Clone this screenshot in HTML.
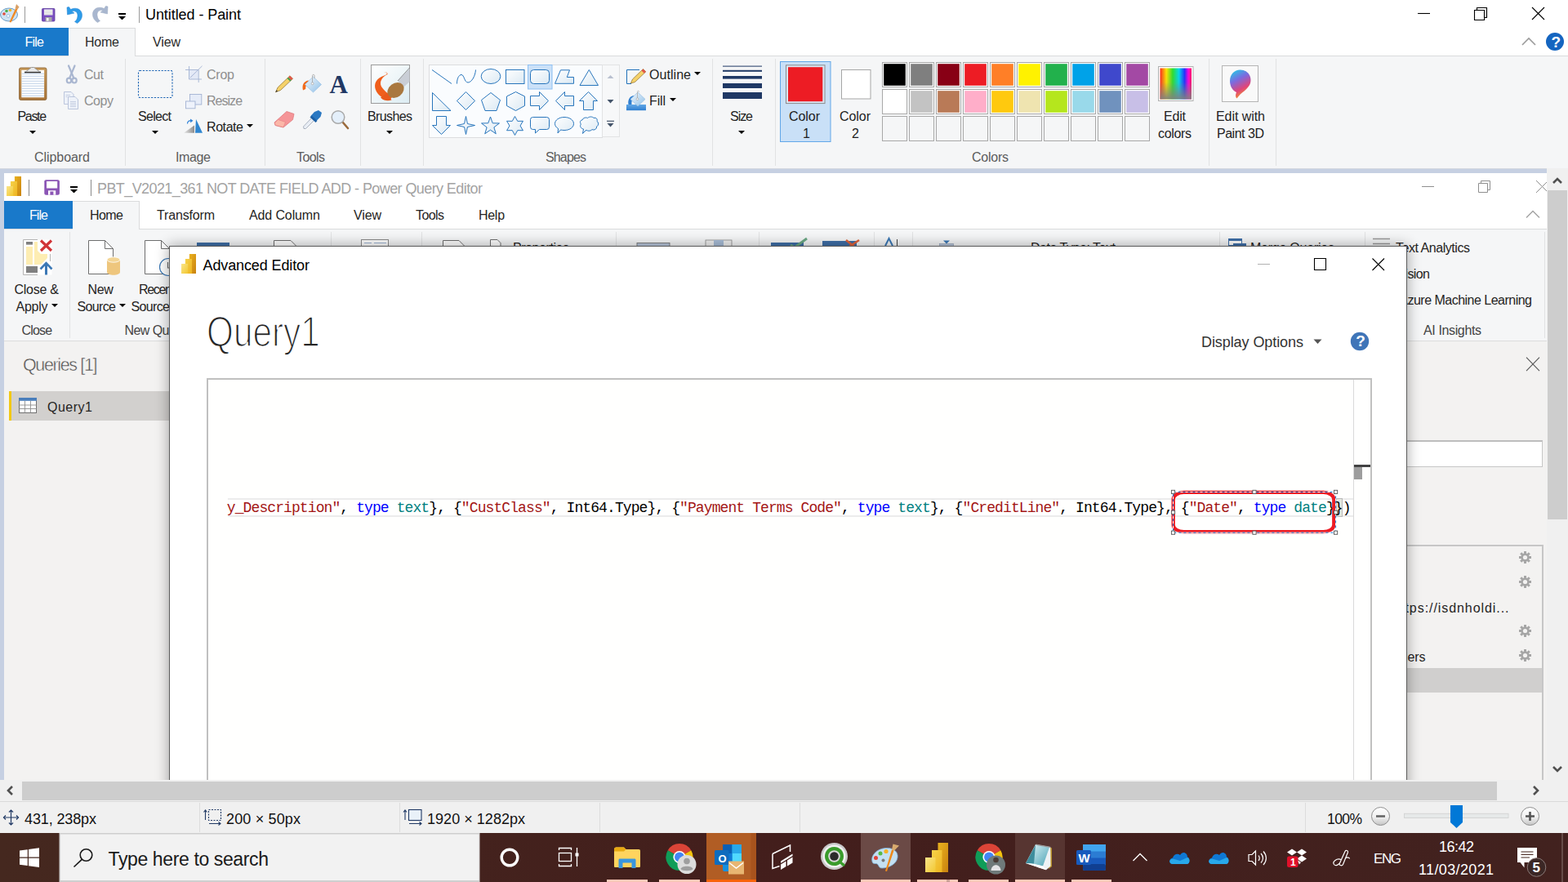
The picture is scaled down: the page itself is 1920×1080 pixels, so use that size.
<!DOCTYPE html>
<html lang="en"><head><meta charset="utf-8"><title>Untitled - Paint</title>
<style>
html,body{margin:0;padding:0;}
body{width:1920px;height:1080px;overflow:hidden;position:relative;background:#fff;font-family:"Liberation Sans",sans-serif;}
div,span,svg{position:absolute;box-sizing:border-box;}
.t{white-space:nowrap;}
.s{font-family:"Liberation Sans",sans-serif;}
.m{font-family:"Liberation Mono",monospace;}
.r{font-family:"Liberation Serif",serif;}
.clip{overflow:hidden;}
</style></head><body>
<div style="left:0px;top:0px;width:1920px;height:34px;background:#ffffff;"></div>
<div style="left:0px;top:34px;width:1920px;height:35px;background:#ffffff;border-bottom:1px solid #dadbdc;"></div>
<div style="left:0px;top:69px;width:1920px;height:137px;background:#f5f6f7;"></div>
<div style="left:0px;top:34px;width:84px;height:34px;background:#1979ca;"></div>
<span class="t s" style="left:30.50px;top:44px;font-size:16px;line-height:16px;color:#ffffff;letter-spacing:-0.753px;">File</span>
<div style="left:84px;top:34px;width:82px;height:35px;background:#f5f6f7;border:1px solid #dadbdc;border-bottom:none;border-left:none;"></div>
<span class="t s" style="left:104.00px;top:44px;font-size:16px;line-height:16px;color:#2b2b2b;letter-spacing:-0.240px;">Home</span>
<span class="t s" style="left:187.00px;top:44px;font-size:16px;line-height:16px;color:#2b2b2b;letter-spacing:-0.133px;">View</span>
<span class="t s" style="left:178.00px;top:9px;font-size:18px;line-height:18px;color:#000000;letter-spacing:-0.072px;">Untitled - Paint</span>
<div style="left:30px;top:8px;width:1px;height:20px;background:#9a9a9a;"></div>
<div style="left:170px;top:8px;width:1px;height:20px;background:#9a9a9a;"></div>
<div style="left:145px;top:16px;width:9px;height:1.5px;background:#000;"></div>
<svg style="left:145px;top:19.5px;" width="9" height="4.5" viewBox="0 0 9 4.5"><path d="M0 0H9L4.5 4.5Z" fill="#000"/></svg>
<svg style="left:1730px;top:0px;" width="180" height="34" viewBox="0 0 180 34"><g stroke="#000" stroke-width="1.1" fill="none">
      <path d="M6 16.5H21"/>
      <path d="M75.5 12.5H87.5V24.5H75.5Z"/><path d="M78.5 12.5V9.5H90.5V21.5H87.5"/>
      <path d="M146 9L161 24M161 9L146 24"/></g></svg>
<svg style="left:1862px;top:44px;" width="20" height="14" viewBox="0 0 20 14"><path d="M2 11L10 3L18 11" stroke="#9b9b9b" stroke-width="1.6" fill="none"/></svg>
<div style="left:1893px;top:40px;width:22px;height:22px;background:#1565c0;border-radius:50%;"></div>
<span class="t s" style="left:1899.50px;top:42px;font-size:19px;line-height:19px;color:#ffffff;font-weight:bold;">?</span>
<svg style="left:0;top:0" width="1920" height="206" viewBox="0 0 1920 206"><defs>
<linearGradient id="shp" x1="0" y1="0" x2="1" y2="1"><stop offset="0" stop-color="#ffffff"/><stop offset="1" stop-color="#dbe9f3"/></linearGradient>
<linearGradient id="rain" x1="0" y1="0" x2="1" y2="0"><stop offset="0" stop-color="#ff2a1a"/><stop offset="0.2" stop-color="#ffe600"/><stop offset="0.4" stop-color="#2de02d"/><stop offset="0.6" stop-color="#00d8f0"/><stop offset="0.78" stop-color="#2030ff"/><stop offset="0.9" stop-color="#ff00e0"/><stop offset="1" stop-color="#ff1060"/></linearGradient>
<linearGradient id="rainfade" x1="0" y1="0" x2="0" y2="1"><stop offset="0" stop-color="#808080" stop-opacity="0"/><stop offset="0.45" stop-color="#808080" stop-opacity="0.1"/><stop offset="1" stop-color="#808080" stop-opacity="0.95"/></linearGradient>
<linearGradient id="clipb" x1="0" y1="0" x2="0" y2="1"><stop offset="0" stop-color="#c79a5a"/><stop offset="1" stop-color="#a8743a"/></linearGradient>
<linearGradient id="p3d" x1="0.2" y1="0" x2="0.6" y2="1"><stop offset="0" stop-color="#27c7e6"/><stop offset="0.35" stop-color="#7a6be0"/><stop offset="0.7" stop-color="#e0457a"/><stop offset="1" stop-color="#f5a21a"/></linearGradient>
<linearGradient id="gry" x1="0" y1="0" x2="1" y2="0"><stop offset="0" stop-color="#e8e8e8"/><stop offset="1" stop-color="#8c8c8c"/></linearGradient>
<linearGradient id="bluebar" x1="0" y1="0" x2="0" y2="1"><stop offset="0" stop-color="#62a8e6"/><stop offset="1" stop-color="#2f7fd0"/></linearGradient>
<linearGradient id="bucket" x1="0" y1="0" x2="1" y2="1"><stop offset="0" stop-color="#f4f9fd"/><stop offset="1" stop-color="#8fc0e8"/></linearGradient>
<linearGradient id="brbg" x1="0" y1="0" x2="1" y2="1"><stop offset="0" stop-color="#ffffff"/><stop offset="1" stop-color="#dcecf2"/></linearGradient>
</defs><ellipse cx="11" cy="18" rx="10.5" ry="8" fill="#cfe3f3" stroke="#6d9ec7" stroke-width="1"/><circle cx="5" cy="17" r="1.8" fill="#e04a3a"/><circle cx="8" cy="13.5" r="1.8" fill="#4caf50"/><circle cx="12.5" cy="12.5" r="1.8" fill="#f5b82e"/><circle cx="10" cy="19.5" r="1.8" fill="#ffffff" stroke="#6d9ec7" stroke-width="0.6"/><path d="M11.5 27L19 10.5L21.5 11.5L13.5 27.5Z" fill="#f08a24"/><path d="M18.5 10.5L20 5L23.5 8.5L21.5 11.5Z" fill="#d9a066"/><rect x="51.5" y="10.5" width="15.5" height="15.5" rx="1" fill="#7a4fc0" stroke="#5b3a9a" stroke-width="0.8"/><rect x="54" y="11.5" width="10.5" height="7" fill="#f4f4f4"/><path d="M54.5 13.5H64M54.5 15.5H64M54.5 17.3H64" stroke="#c9c9c9" stroke-width="0.6"/><rect x="55.5" y="21" width="8" height="5" fill="#a8a8a8"/><rect x="57" y="22" width="2.5" height="3.5" fill="#fff"/><path d="M82 9L82.5 18L91 16L88 14C92 12.5 95.5 15 95 20C94.7 23.5 93 25.5 91.5 26.5L94.5 28.5C98.5 26 100.5 22.5 100.5 18.5C100.5 12 94 8 86.5 11.5L84.5 8.5Z" fill="#2d9be8" stroke="#1f7fd0" stroke-width="0.5"/><path d="M132 8L131.5 17L123 15L126 13C122 11.5 118.5 14 119 19C119.3 22.5 121 24.5 122.5 25.5L119.5 27.5C115.5 25 113.5 21.5 113.5 17.5C113.5 11 120 7 127.5 10.5L129.5 7.5Z" fill="#a9b7cf" stroke="#97a6c0" stroke-width="0.5"/><rect x="23.5" y="83" width="33.5" height="39.5" rx="2" fill="url(#clipb)" stroke="#8a5f2e" stroke-width="0.8"/><rect x="26.3" y="85.8" width="27.8" height="33.5" fill="#ffffff"/><path d="M26.5 90.3H54" stroke="#b9cce4" stroke-width="0.9"/><path d="M26.5 93.3H54" stroke="#b9cce4" stroke-width="0.9"/><path d="M26.5 96.3H54" stroke="#b9cce4" stroke-width="0.9"/><path d="M26.5 99.3H54" stroke="#b9cce4" stroke-width="0.9"/><path d="M26.5 102.3H54" stroke="#b9cce4" stroke-width="0.9"/><path d="M26.5 105.3H54" stroke="#b9cce4" stroke-width="0.9"/><path d="M26.5 108.3H54" stroke="#b9cce4" stroke-width="0.9"/><path d="M26.5 111.3H54" stroke="#b9cce4" stroke-width="0.9"/><path d="M26.5 114.3H54" stroke="#b9cce4" stroke-width="0.9"/><path d="M26.5 117.3H54" stroke="#b9cce4" stroke-width="0.9"/><path d="M30 88.5H50" stroke="#2a2a2a" stroke-width="1.6"/><path d="M32 87.5L38.5 82.5H41.5L48 87.5" stroke="#9a9a9a" stroke-width="1" fill="#e8e8e8"/><g stroke="#a9b6d0" stroke-width="2.2" fill="none" stroke-linecap="round"><path d="M84 80.5L90.5 96"/><path d="M91.5 80.5L85 96"/><ellipse cx="84.5" cy="98.5" rx="2.7" ry="3"/><ellipse cx="91" cy="98.5" rx="2.7" ry="3"/></g><g fill="#eef2f9" stroke="#b4c0d8" stroke-width="0.9"><path d="M78.5 112.5H87L90 115.5V127.5H78.5Z"/><path d="M83.5 118.5H92L95.5 122V133.5H83.5Z"/></g><path d="M86 124.5H93M86 126.5H93M86 128.5H93M86 130.5H93M80.5 116.5H86M80.5 118.5H82.5" stroke="#b4c0d8" stroke-width="0.7"/><rect x="169.5" y="86.5" width="41.5" height="33" rx="1.5" fill="none" stroke="#1c64b4" stroke-width="1.1" stroke-dasharray="2.2 1.6"/><rect x="231.5" y="85.5" width="11.5" height="11.5" fill="#e3e9f6"/><g stroke="#a3b2d2" stroke-width="0.9" fill="none"><path d="M227 85.5H243.2V101"/><path d="M231.5 81V97H247"/><path d="M233 95L247.5 80.8"/></g><rect x="232.5" y="115.5" width="14.3" height="12.5" fill="#e6ecf8" stroke="#a3b2d2" stroke-width="0.9"/><rect x="227.5" y="124" width="11.5" height="8.8" fill="#eef2fb" stroke="#a3b2d2" stroke-width="0.9"/><path d="M225 162.8H238V153.5Z" fill="url(#gry)"/><path d="M239 162.8H248L240 146Z" fill="#2f86d0"/><path d="M229.5 151.5C229.5 148.5 232 147.3 234.5 147.6" stroke="#2a7fd6" stroke-width="1.2" fill="none"/><path d="M233 145.5L236.5 147.7L233.3 150.2Z" fill="#2a7fd6"/><path d="M337.5 112.8L340.2 107L355 92.8L358.5 96.3L343.5 110.5Z" fill="#f5d26a" stroke="#8a6a2a" stroke-width="0.7"/><path d="M353 94.8L355 92.8L358.5 96.3L356.5 98.3Z" fill="#e2574c"/><path d="M351.6 96L353 94.7L356.6 98.2L355.2 99.5Z" fill="#3e9a4a"/><path d="M337.5 112.8L338.6 110.3L340.2 111.8Z" fill="#333"/><path d="M371 110.5C369.5 104 372 99.5 377.5 98.5L379 100.5C375.5 102 374 105 374.2 109Z" fill="#f26a1b"/><path d="M373.5 103.5L383.5 94L393.5 103.5L383.5 113Z" fill="url(#bucket)" stroke="#9cc3e6" stroke-width="0.8"/><path d="M382.5 102V92.5C382.5 91 385 91 385 92.5V96" stroke="#b0b0b0" stroke-width="1" fill="none"/><circle cx="382.6" cy="102.3" r="1.4" fill="#fff" stroke="#a0a0a0" stroke-width="0.7"/><path d="M336 150L351 136.5L360 139.5L358.5 146.5L347 156L337 153.5Z" fill="#f59598" stroke="#e07a7e" stroke-width="0.8"/><path d="M336.5 150.5L340.5 146.5L349.5 149.5L347 155.8L337.2 153.3Z" fill="#fbb7a8" stroke="#e07a7e" stroke-width="0.5"/><path d="M372 157.5L371.5 155L381.5 144.5L384.5 147.5L374.5 157.5Z" fill="#e9eef5" stroke="#9aa3b2" stroke-width="0.8"/><path d="M380.5 142L385 137L390 135L394 138L392.5 143L387.5 148Z" fill="#2a78c2"/><path d="M379.5 143.5L381.5 141.5L388.5 148L386.5 150Z" fill="#1c5fa5"/><path d="M419.5 149.5L426 157" stroke="#9a6a3c" stroke-width="2.6" stroke-linecap="round"/><circle cx="414" cy="143.5" r="7.8" fill="#e4effa" stroke="#a9a9a9" stroke-width="1.5"/><rect x="454.5" y="79.5" width="47" height="47" fill="url(#brbg)" stroke="#9b9b9b" stroke-width="1"/><path d="M487 99L501.5 84V100L494 107Z" fill="#c9ced6"/><path d="M487 99L501.5 83" stroke="#7a7a7a" stroke-width="0.8"/><path d="M470 88C476 88.5 474 91.5 470.5 92.5C460 96 457.5 103 460 110C462.5 116.5 470 122 477 122.5L480 119C476 115 470 111 467 106C464 100 468 94 474.5 91C475 89 473 87.5 470 88Z" fill="#f05f1c"/><ellipse cx="484.5" cy="110.5" rx="11" ry="8.5" transform="rotate(-38 484.5 110.5)" fill="#a9783f"/><path d="M466 119.5L474 113.5L479.5 122.5C475 124 470 123.5 466 119.5Z" fill="#e85a1c"/><rect x="525.5" y="79.5" width="212" height="89" fill="#fafcfe" stroke="#dcdddf" stroke-width="1"/><rect x="737.5" y="79.5" width="21" height="88" fill="#f7f8f9" stroke="#e2e3e4" stroke-width="1"/><path d="M743.5 96L747.5 92L751.5 96Z" fill="#b9c0cf"/><path d="M743.5 122L751.5 122L747.5 126.5Z" fill="#44546a"/><path d="M743 148.3H752" stroke="#44546a" stroke-width="1.2"/><path d="M743.5 151L751.5 151L747.5 155.5Z" fill="#44546a"/><rect x="646.5" y="79.5" width="29.5" height="29.5" fill="#cbe1f8" stroke="#8fc0f2" stroke-width="1"/><g fill="url(#shp)" stroke="#1d6fb8" stroke-width="0.95" stroke-linejoin="miter"><path d="M529 85.5L553 102.5" fill="none"/><path d="M559.5 102.5C559.5 96 562 91.5 565 91.5C568.5 91.5 568.5 101 573 101C577.5 101 582 93 582.5 85.5" fill="none"/><ellipse cx="601" cy="93.5" rx="11.8" ry="9"/><rect x="619.5" y="85.5" width="22.5" height="17"/><rect x="649.5" y="85.5" width="23" height="17" rx="4"/><path d="M679.5 102.3L686.5 85.8H697.5L694.3 94.5H702.5V102.3Z"/><path d="M710 104.5L721.3 85.5L732.5 104.5Z"/><path d="M529.5 113.5V135.5H552Z"/><path d="M559.5 123.5L570.5 112.5L581.5 123.5L570.5 134.5Z"/><path d="M601 113.5L612.5 122.5L608 135.5H594L589.5 122.5Z"/><path d="M620.5 118L631.5 112.5L642.5 118V129.5L631.5 135.5L620.5 129.5Z"/><path d="M649.5 117.5H660.5V112.5L671.5 123.5L660.5 134.5V129.5H649.5Z"/><path d="M702.5 117.5H691.5V112.5L680.5 123.5L691.5 134.5V129.5H702.5Z"/><path d="M720.5 112.5L731.5 123.5H726.5V134.5H714.5V123.5H709.5Z"/><path d="M534.5 142.5H546.5V153.5H551.5L540.5 164.5L529.5 153.5H534.5Z"/><polygon points="570.50,142.50 572.48,151.52 581.50,153.50 572.48,155.48 570.50,164.50 568.52,155.48 559.50,153.50 568.52,151.52"/><polygon points="600.50,143.00 603.20,150.78 611.44,150.95 604.87,155.92 607.26,163.80 600.50,159.10 593.74,163.80 596.13,155.92 589.56,150.95 597.80,150.78"/><polygon points="630.50,142.50 633.75,148.37 640.46,148.25 637.00,154.00 640.46,159.75 633.75,159.63 630.50,165.50 627.25,159.63 620.54,159.75 624.00,154.00 620.54,148.25 627.25,148.37"/><path d="M652.5 143.5H669.5Q672.5 143.5 672.5 146.5V155.5Q672.5 158.5 669.5 158.5H660.5L655.5 163V158.5H652.5Q649.5 158.5 649.5 155.5V146.5Q649.5 143.5 652.5 143.5Z"/><path d="M691 143.5C697.5 143.5 702.5 147 702.5 151.5C702.5 156 697.5 159.5 691 159.5C689.5 159.5 688 159.3 686.5 159L683 163L683.5 157.5C681 156 679.5 154 679.5 151.5C679.5 147 684.5 143.5 691 143.5Z"/><path d="M713 147C714 144 717.5 143.5 719.5 144.5C721.5 142.5 725.5 142.5 727 144.5C730 143.5 732 146 731 148.5C733.5 150 733 154 730.5 155C731 158 727.5 160 725 158.5C723 161 719 160.5 718 159L713.5 163.5L714.5 158C711 157.5 709.5 154 711.5 152C709.5 150 710.5 147 713 147Z"/></g><path d="M783 85.5H767.5V102.5H773" fill="none" stroke="#1d6fb8" stroke-width="1"/><path d="M772.3 102L774.5 97L787.5 84.5L790.8 87.8L777.5 100.5Z" fill="#f5d26a" stroke="#8a6a2a" stroke-width="0.7"/><path d="M785.5 86.4L787.5 84.5L790.8 87.8L788.8 89.7Z" fill="#e2574c"/><rect x="767" y="128" width="24" height="7.2" fill="url(#bluebar)"/><path d="M769.5 128C768.5 122 771 118 776 117L777 119.5C774 121 773 124 773.5 128Z" fill="#2f7fd0"/><path d="M772 121.5L781 113L790 121.5L781 130Z" fill="url(#bucket)" stroke="#9cc3e6" stroke-width="0.8"/><path d="M780.5 121V112.5C780.5 111 782.5 111 782.5 112.5" stroke="#b0b0b0" stroke-width="0.9" fill="none"/><circle cx="780.5" cy="121.3" r="1.3" fill="#fff" stroke="#a0a0a0" stroke-width="0.7"/><g fill="#1f3864"><rect x="885" y="80.6" width="48" height="1"/><rect x="885" y="85.8" width="48" height="2"/><rect x="885" y="93" width="48" height="3.6"/><rect x="885" y="102" width="48" height="6"/><rect x="885" y="113" width="48" height="8"/></g><rect x="955.5" y="75.5" width="61.5" height="98" fill="#c9e0f7" stroke="#62a7e8" stroke-width="1"/><rect x="962.5" y="79.8" width="47.5" height="46.8" fill="#d9e6f4" stroke="#8a8a8a" stroke-width="1"/><rect x="965" y="82.2" width="42.3" height="42" fill="#ed1c24"/><rect x="1030.5" y="85.5" width="35.5" height="35.5" fill="#ffffff" stroke="#a6a6a6" stroke-width="1"/><rect x="1080.5" y="76.5" width="30" height="30" fill="#ffffff" stroke="#a8a8a8" stroke-width="1"/><rect x="1082.2" y="78.2" width="26.6" height="26.6" fill="#000000"/><rect x="1113.5" y="76.5" width="30" height="30" fill="#ffffff" stroke="#a8a8a8" stroke-width="1"/><rect x="1115.2" y="78.2" width="26.6" height="26.6" fill="#7f7f7f"/><rect x="1146.5" y="76.5" width="30" height="30" fill="#ffffff" stroke="#a8a8a8" stroke-width="1"/><rect x="1148.2" y="78.2" width="26.6" height="26.6" fill="#880015"/><rect x="1179.5" y="76.5" width="30" height="30" fill="#ffffff" stroke="#a8a8a8" stroke-width="1"/><rect x="1181.2" y="78.2" width="26.6" height="26.6" fill="#ed1c24"/><rect x="1212.5" y="76.5" width="30" height="30" fill="#ffffff" stroke="#a8a8a8" stroke-width="1"/><rect x="1214.2" y="78.2" width="26.6" height="26.6" fill="#ff7f27"/><rect x="1245.5" y="76.5" width="30" height="30" fill="#ffffff" stroke="#a8a8a8" stroke-width="1"/><rect x="1247.2" y="78.2" width="26.6" height="26.6" fill="#fff200"/><rect x="1278.5" y="76.5" width="30" height="30" fill="#ffffff" stroke="#a8a8a8" stroke-width="1"/><rect x="1280.2" y="78.2" width="26.6" height="26.6" fill="#22b14c"/><rect x="1311.5" y="76.5" width="30" height="30" fill="#ffffff" stroke="#a8a8a8" stroke-width="1"/><rect x="1313.2" y="78.2" width="26.6" height="26.6" fill="#00a2e8"/><rect x="1344.5" y="76.5" width="30" height="30" fill="#ffffff" stroke="#a8a8a8" stroke-width="1"/><rect x="1346.2" y="78.2" width="26.6" height="26.6" fill="#3f48cc"/><rect x="1377.5" y="76.5" width="30" height="30" fill="#ffffff" stroke="#a8a8a8" stroke-width="1"/><rect x="1379.2" y="78.2" width="26.6" height="26.6" fill="#a349a4"/><rect x="1080.5" y="109.5" width="30" height="30" fill="#ffffff" stroke="#a8a8a8" stroke-width="1"/><rect x="1082.2" y="111.2" width="26.6" height="26.6" fill="#ffffff"/><rect x="1113.5" y="109.5" width="30" height="30" fill="#ffffff" stroke="#a8a8a8" stroke-width="1"/><rect x="1115.2" y="111.2" width="26.6" height="26.6" fill="#c3c3c3"/><rect x="1146.5" y="109.5" width="30" height="30" fill="#ffffff" stroke="#a8a8a8" stroke-width="1"/><rect x="1148.2" y="111.2" width="26.6" height="26.6" fill="#b97a57"/><rect x="1179.5" y="109.5" width="30" height="30" fill="#ffffff" stroke="#a8a8a8" stroke-width="1"/><rect x="1181.2" y="111.2" width="26.6" height="26.6" fill="#ffaec9"/><rect x="1212.5" y="109.5" width="30" height="30" fill="#ffffff" stroke="#a8a8a8" stroke-width="1"/><rect x="1214.2" y="111.2" width="26.6" height="26.6" fill="#ffc90e"/><rect x="1245.5" y="109.5" width="30" height="30" fill="#ffffff" stroke="#a8a8a8" stroke-width="1"/><rect x="1247.2" y="111.2" width="26.6" height="26.6" fill="#efe4b0"/><rect x="1278.5" y="109.5" width="30" height="30" fill="#ffffff" stroke="#a8a8a8" stroke-width="1"/><rect x="1280.2" y="111.2" width="26.6" height="26.6" fill="#b5e61d"/><rect x="1311.5" y="109.5" width="30" height="30" fill="#ffffff" stroke="#a8a8a8" stroke-width="1"/><rect x="1313.2" y="111.2" width="26.6" height="26.6" fill="#99d9ea"/><rect x="1344.5" y="109.5" width="30" height="30" fill="#ffffff" stroke="#a8a8a8" stroke-width="1"/><rect x="1346.2" y="111.2" width="26.6" height="26.6" fill="#7092be"/><rect x="1377.5" y="109.5" width="30" height="30" fill="#ffffff" stroke="#a8a8a8" stroke-width="1"/><rect x="1379.2" y="111.2" width="26.6" height="26.6" fill="#c8bfe7"/><rect x="1080.5" y="142.5" width="30" height="30" fill="#f5f6f7" stroke="#a8a8a8" stroke-width="1"/><rect x="1113.5" y="142.5" width="30" height="30" fill="#f5f6f7" stroke="#a8a8a8" stroke-width="1"/><rect x="1146.5" y="142.5" width="30" height="30" fill="#f5f6f7" stroke="#a8a8a8" stroke-width="1"/><rect x="1179.5" y="142.5" width="30" height="30" fill="#f5f6f7" stroke="#a8a8a8" stroke-width="1"/><rect x="1212.5" y="142.5" width="30" height="30" fill="#f5f6f7" stroke="#a8a8a8" stroke-width="1"/><rect x="1245.5" y="142.5" width="30" height="30" fill="#f5f6f7" stroke="#a8a8a8" stroke-width="1"/><rect x="1278.5" y="142.5" width="30" height="30" fill="#f5f6f7" stroke="#a8a8a8" stroke-width="1"/><rect x="1311.5" y="142.5" width="30" height="30" fill="#f5f6f7" stroke="#a8a8a8" stroke-width="1"/><rect x="1344.5" y="142.5" width="30" height="30" fill="#f5f6f7" stroke="#a8a8a8" stroke-width="1"/><rect x="1377.5" y="142.5" width="30" height="30" fill="#f5f6f7" stroke="#a8a8a8" stroke-width="1"/><rect x="1418.5" y="81.5" width="42.5" height="42" fill="#ffffff" stroke="#b0b0b0" stroke-width="1"/><rect x="1420.5" y="83.5" width="38.5" height="38" fill="url(#rain)"/><rect x="1420.5" y="83.5" width="38.5" height="38" fill="url(#rainfade)"/><rect x="1496.5" y="80.5" width="44" height="44" fill="#f9f9f9" stroke="#b5b5b5" stroke-width="1"/><path d="M1518.5 85.5C1526 85.5 1531.5 91 1531.5 98C1531.5 105 1526.5 109 1521 113.5C1518 116 1516 118.5 1514.5 120.5C1512.5 119 1512.8 115.5 1514 113C1509 110.5 1506 105.5 1506 99C1506 91 1511.5 85.5 1518.5 85.5Z" fill="url(#p3d)"/></svg>
<span class="t r" style="left:403.50px;top:88px;font-size:31px;line-height:31px;color:#1f3864;font-weight:bold;">A</span>
<div style="left:153px;top:72px;width:1px;height:131px;background:#e1e2e3;"></div>
<div style="left:324px;top:72px;width:1px;height:131px;background:#e1e2e3;"></div>
<div style="left:441px;top:72px;width:1px;height:131px;background:#e1e2e3;"></div>
<div style="left:518px;top:72px;width:1px;height:131px;background:#e1e2e3;"></div>
<div style="left:872px;top:72px;width:1px;height:131px;background:#e1e2e3;"></div>
<div style="left:949px;top:72px;width:1px;height:131px;background:#e1e2e3;"></div>
<div style="left:1480px;top:72px;width:1px;height:131px;background:#e1e2e3;"></div>
<div style="left:1562px;top:72px;width:1px;height:131px;background:#e1e2e3;"></div>
<span class="t s" style="left:42.00px;top:185px;font-size:16px;line-height:16px;color:#5c5c5c;letter-spacing:-0.060px;">Clipboard</span>
<span class="t s" style="left:215.00px;top:185px;font-size:16px;line-height:16px;color:#5c5c5c;letter-spacing:-0.370px;">Image</span>
<span class="t s" style="left:363.00px;top:185px;font-size:16px;line-height:16px;color:#5c5c5c;letter-spacing:-0.590px;">Tools</span>
<span class="t s" style="left:668.00px;top:185px;font-size:16px;line-height:16px;color:#5c5c5c;letter-spacing:-0.848px;">Shapes</span>
<span class="t s" style="left:1190.00px;top:185px;font-size:16px;line-height:16px;color:#5c5c5c;letter-spacing:-0.248px;">Colors</span>
<span class="t s" style="left:21.50px;top:135px;font-size:16px;line-height:16px;color:#1e1e1e;letter-spacing:-1.345px;">Paste</span>
<svg style="left:35.5px;top:160px;" width="8" height="4" viewBox="0 0 8 4"><path d="M0 0H8L4.0 4Z" fill="#000"/></svg>
<span class="t s" style="left:103.00px;top:84px;font-size:16px;line-height:16px;color:#8f8f8f;letter-spacing:-0.440px;">Cut</span>
<span class="t s" style="left:103.00px;top:116px;font-size:16px;line-height:16px;color:#8f8f8f;letter-spacing:-0.453px;">Copy</span>
<span class="t s" style="left:169.00px;top:135px;font-size:16px;line-height:16px;color:#1e1e1e;letter-spacing:-0.696px;">Select</span>
<svg style="left:185.5px;top:160px;" width="8" height="4" viewBox="0 0 8 4"><path d="M0 0H8L4.0 4Z" fill="#000"/></svg>
<span class="t s" style="left:253.00px;top:84px;font-size:16px;line-height:16px;color:#8f8f8f;letter-spacing:-0.240px;">Crop</span>
<span class="t s" style="left:253.00px;top:116px;font-size:16px;line-height:16px;color:#8f8f8f;letter-spacing:-0.976px;">Resize</span>
<span class="t s" style="left:253.00px;top:148px;font-size:16px;line-height:16px;color:#1e1e1e;letter-spacing:-0.424px;">Rotate</span>
<svg style="left:302px;top:152px;" width="8" height="4" viewBox="0 0 8 4"><path d="M0 0H8L4.0 4Z" fill="#000"/></svg>
<span class="t s" style="left:450.00px;top:135px;font-size:16px;line-height:16px;color:#1e1e1e;letter-spacing:-0.620px;">Brushes</span>
<svg style="left:473px;top:160px;" width="8" height="4" viewBox="0 0 8 4"><path d="M0 0H8L4.0 4Z" fill="#000"/></svg>
<span class="t s" style="left:795.00px;top:84px;font-size:16px;line-height:16px;color:#1e1e1e;letter-spacing:0.047px;">Outline</span>
<svg style="left:850px;top:88px;" width="8" height="4" viewBox="0 0 8 4"><path d="M0 0H8L4.0 4Z" fill="#000"/></svg>
<span class="t s" style="left:795.00px;top:116px;font-size:16px;line-height:16px;color:#1e1e1e;letter-spacing:-0.133px;">Fill</span>
<svg style="left:819.5px;top:120px;" width="8" height="4" viewBox="0 0 8 4"><path d="M0 0H8L4.0 4Z" fill="#000"/></svg>
<span class="t s" style="left:894.00px;top:135px;font-size:16px;line-height:16px;color:#1e1e1e;letter-spacing:-1.040px;">Size</span>
<svg style="left:904px;top:160px;" width="8" height="4" viewBox="0 0 8 4"><path d="M0 0H8L4.0 4Z" fill="#000"/></svg>
<span class="t s" style="left:966.00px;top:135px;font-size:16px;line-height:16px;color:#1e1e1e;letter-spacing:-0.060px;">Color</span>
<span class="t s" style="left:983.00px;top:156px;font-size:16px;line-height:16px;color:#1e1e1e;">1</span>
<span class="t s" style="left:1028.00px;top:135px;font-size:16px;line-height:16px;color:#1e1e1e;letter-spacing:-0.060px;">Color</span>
<span class="t s" style="left:1043.00px;top:156px;font-size:16px;line-height:16px;color:#1e1e1e;">2</span>
<span class="t s" style="left:1425.00px;top:135px;font-size:16px;line-height:16px;color:#1e1e1e;letter-spacing:-0.200px;">Edit</span>
<span class="t s" style="left:1418.00px;top:156px;font-size:16px;line-height:16px;color:#1e1e1e;letter-spacing:-0.344px;">colors</span>
<span class="t s" style="left:1489.00px;top:135px;font-size:16px;line-height:16px;color:#1e1e1e;letter-spacing:-0.060px;">Edit with</span>
<span class="t s" style="left:1490.00px;top:156px;font-size:16px;line-height:16px;color:#1e1e1e;letter-spacing:-0.480px;">Paint 3D</span>
<div style="left:0px;top:206px;width:1894px;height:775px;background:#c6d0e2;"></div>
<div style="left:0px;top:206px;width:1894px;height:1px;background:#d5d9e0;"></div>
<div class="clip" style="left:5px;top:212px;width:1889px;height:743px;background:#fff;"><div style="left:-5px;top:-212px;width:1920px;height:1080px;"><div style="left:5px;top:212px;width:1890px;height:69px;background:#ffffff;"></div>
<div style="left:5px;top:280px;width:1890px;height:1px;background:#dadbdc;"></div>
<div style="left:5px;top:281px;width:1890px;height:137px;background:#f5f6f7;"></div>
<div style="left:5px;top:417px;width:1890px;height:1px;background:#dcdcdc;"></div>
<div style="left:5px;top:418px;width:1890px;height:540px;background:#f3f2f1;"></div>
<div style="left:5px;top:246px;width:84px;height:34px;background:#1979ca;"></div>
<span class="t s" style="left:36.00px;top:256px;font-size:16px;line-height:16px;color:#ffffff;letter-spacing:-0.920px;">File</span>
<div style="left:89px;top:246px;width:82px;height:35px;background:#f5f6f7;border:1px solid #dadbdc;border-bottom:none;border-left:none;"></div>
<span class="t s" style="left:110.00px;top:256px;font-size:16px;line-height:16px;color:#252423;letter-spacing:-0.573px;">Home</span>
<span class="t s" style="left:192.00px;top:256px;font-size:16px;line-height:16px;color:#252423;letter-spacing:-0.165px;">Transform</span>
<span class="t s" style="left:305.00px;top:256px;font-size:16px;line-height:16px;color:#252423;letter-spacing:-0.120px;">Add Column</span>
<span class="t s" style="left:433.00px;top:256px;font-size:16px;line-height:16px;color:#252423;letter-spacing:-0.133px;">View</span>
<span class="t s" style="left:509.00px;top:256px;font-size:16px;line-height:16px;color:#252423;letter-spacing:-0.590px;">Tools</span>
<span class="t s" style="left:586.00px;top:256px;font-size:16px;line-height:16px;color:#252423;letter-spacing:-0.293px;">Help</span>
<div style="left:35px;top:220px;width:1px;height:20px;background:#8a8a8a;"></div>
<div style="left:111px;top:220px;width:1px;height:20px;background:#8a8a8a;"></div>
<span class="t s" style="left:119.00px;top:222px;font-size:18px;line-height:18px;color:#a3a3a3;letter-spacing:-0.588px;">PBT_V2021_361 NOT DATE FIELD ADD - Power Query Editor</span>
<div style="left:85.5px;top:228px;width:9px;height:1.5px;background:#000;"></div>
<svg style="left:85.5px;top:231.5px;" width="9" height="4.5" viewBox="0 0 9 4.5"><path d="M0 0H9L4.5 4.5Z" fill="#000"/></svg>
<div style="left:85px;top:284px;width:1px;height:130px;background:#e1e2e3;"></div>
<div style="left:405px;top:284px;width:1px;height:130px;background:#e1e2e3;"></div>
<div style="left:516px;top:284px;width:1px;height:130px;background:#e1e2e3;"></div>
<div style="left:754px;top:284px;width:1px;height:130px;background:#e1e2e3;"></div>
<div style="left:929px;top:284px;width:1px;height:130px;background:#e1e2e3;"></div>
<div style="left:1070px;top:284px;width:1px;height:130px;background:#e1e2e3;"></div>
<div style="left:1117px;top:284px;width:1px;height:130px;background:#e1e2e3;"></div>
<div style="left:1493px;top:284px;width:1px;height:130px;background:#e1e2e3;"></div>
<div style="left:1671px;top:284px;width:1px;height:130px;background:#e1e2e3;"></div>
<div style="left:1891px;top:284px;width:1px;height:130px;background:#e1e2e3;"></div>
<span class="t s" style="left:17.50px;top:347px;font-size:16px;line-height:16px;color:#252423;letter-spacing:-0.250px;">Close &amp;</span>
<span class="t s" style="left:19.50px;top:368px;font-size:16px;line-height:16px;color:#252423;letter-spacing:-0.250px;">Apply</span>
<span class="t s" style="left:26.50px;top:397px;font-size:16px;line-height:16px;color:#444444;letter-spacing:-0.845px;">Close</span>
<span class="t s" style="left:107.50px;top:347px;font-size:16px;line-height:16px;color:#252423;letter-spacing:-0.290px;">New</span>
<span class="t s" style="left:94.50px;top:368px;font-size:16px;line-height:16px;color:#252423;letter-spacing:-0.644px;">Source</span>
<span class="t s" style="left:170.00px;top:347px;font-size:16px;line-height:16px;color:#252423;letter-spacing:-1.344px;">Recent</span>
<span class="t s" style="left:160.50px;top:368px;font-size:16px;line-height:16px;color:#252423;letter-spacing:-0.644px;">Source</span>
<span class="t s" style="left:152.50px;top:397px;font-size:16px;line-height:16px;color:#444444;letter-spacing:-0.562px;">New Query</span>
<span class="t s" style="left:1709.00px;top:296px;font-size:16px;line-height:16px;color:#252423;letter-spacing:-0.458px;">Text Analytics</span>
<span class="t s" style="left:1710.80px;top:328px;font-size:16px;line-height:16px;color:#252423;letter-spacing:-0.620px;">Vision</span>
<span class="t s" style="left:1713.34px;top:360px;font-size:16px;line-height:16px;color:#252423;letter-spacing:-0.515px;">Azure Machine Learning</span>
<span class="t s" style="left:1743.00px;top:397px;font-size:16px;line-height:16px;color:#444444;letter-spacing:-0.372px;">AI Insights</span>
<svg style="left:63px;top:372px;" width="8" height="4" viewBox="0 0 8 4"><path d="M0 0H8L4 4Z" fill="#000"/></svg>
<svg style="left:146px;top:372px;" width="8" height="4" viewBox="0 0 8 4"><path d="M0 0H8L4 4Z" fill="#000"/></svg>
<span class="t s" style="left:628.00px;top:296px;font-size:16px;line-height:16px;color:#252423;letter-spacing:-0.440px;">Properties</span>
<span class="t s" style="left:1262.00px;top:296px;font-size:16px;line-height:16px;color:#252423;letter-spacing:-0.469px;">Data Type: Text</span>
<span class="t s" style="left:1531.00px;top:296px;font-size:16px;line-height:16px;color:#252423;letter-spacing:-0.237px;">Merge Queries</span>
<span class="t s" style="left:28.00px;top:437px;font-size:21.5px;line-height:21.5px;color:#4a4948;letter-spacing:-1.364px;-webkit-text-stroke:0.5px #f3f2f1;">Queries [1]</span>
<div style="left:11px;top:479px;width:200px;height:36px;background:#d2d0ce;"></div>
<div style="left:11px;top:479px;width:3px;height:36px;background:#f2c811;"></div>
<span class="t s" style="left:58.00px;top:491px;font-size:16px;line-height:16px;color:#252423;letter-spacing:0.504px;">Query1</span>
<div style="left:1700px;top:539px;width:189px;height:33px;background:#ffffff;border:1px solid #c6c6c6;border-top:2px solid #bdbdbd;"></div>
<div style="left:1700px;top:667px;width:189.5px;height:300px;background:#f3f2f1;border:2px solid #c6c6c6;"></div>
<div style="left:1700px;top:818px;width:187.5px;height:30px;background:#d0cfce;"></div>
<span class="t s" style="left:1720.50px;top:737px;font-size:16px;line-height:16px;color:#252423;letter-spacing:0.929px;">tps://isdnholdi...</span>
<span class="t s" style="left:1612.99px;top:797px;font-size:16px;line-height:16px;color:#252423;letter-spacing:-0.120px;">Promoted Headers</span>
<svg style="left:0;top:0" width="1920" height="1080" viewBox="0 0 1920 1080"><defs>
<linearGradient id="pbi1" x1="0" y1="0" x2="1" y2="1"><stop offset="0" stop-color="#fbe58a"/><stop offset="1" stop-color="#f2c831"/></linearGradient>
<linearGradient id="pbi2" x1="0" y1="0" x2="1" y2="1"><stop offset="0" stop-color="#f6d24a"/><stop offset="1" stop-color="#eeb420"/></linearGradient>
<linearGradient id="pbi3" x1="0" y1="0" x2="1" y2="1"><stop offset="0" stop-color="#eab21f"/><stop offset="1" stop-color="#c9820f"/></linearGradient>
<linearGradient id="shL" x1="0" y1="0" x2="1" y2="0"><stop offset="0" stop-color="#000" stop-opacity="0"/><stop offset="1" stop-color="#000" stop-opacity="0.3"/></linearGradient>
</defs><rect x="17.9" y="216" width="8.1" height="24" fill="url(#pbi3)"/><rect x="12.9" y="222.0" width="8.1" height="18.0" fill="url(#pbi2)"/><rect x="8.0" y="228.0" width="8.1" height="12.0" fill="url(#pbi1)"/><path d="M59.5 220.5H72.5V238.5H60.5L59.5 237.5Z" fill="none"/><rect x="54.3" y="220.3" width="18.6" height="18.4" rx="2" fill="#8b55b5"/><rect x="57" y="222" width="13.2" height="8.5" fill="#ffffff"/><rect x="59" y="233.3" width="9.2" height="5.4" fill="#ffffff"/><rect x="61.4" y="234.5" width="4" height="4.2" fill="#8b55b5"/><g stroke="#8f8f8f" stroke-width="1" fill="none"><path d="M1741 228.5H1756"/><path d="M1810.5 224.5H1821.5V235.5H1810.5Z"/><path d="M1813.5 224.5V221.5H1824.5V232.5H1821.5"/><path d="M1881 221L1896 236M1896 221L1881 236"/></g><path d="M1869 266.5L1877 258.5L1885 266.5" stroke="#a0a0a0" stroke-width="1.3" fill="none"/><rect x="28.5" y="293.5" width="35" height="43" fill="#ffffff"/><path d="M46 293.5H28.5V336.5H46" fill="none" stroke="#b4b4b4" stroke-width="1"/><path d="M61.5 311V320" stroke="#b4b4b4" stroke-width="1"/><rect x="32" y="296" width="8" height="3.6" fill="#7f7f7f"/><rect x="32" y="302" width="8" height="22" fill="#fdedb2"/><rect x="42" y="296" width="16" height="28" fill="#fdedb2"/><path d="M46 296H64V311H50L46 307Z" fill="#ffffff"/><path d="M50 324L58 316V324Z" fill="#ffffff"/><rect x="32" y="326" width="14" height="8" fill="#808080"/><path d="M50 294.5L63 307M63 294.5L50 307" stroke="#d13438" stroke-width="3.2"/><path d="M56.5 336.5V322" stroke="#3b78b5" stroke-width="3"/><path d="M49.5 329.5L56.5 322.2L63.5 329.5" stroke="#3b78b5" stroke-width="2.6" fill="none"/><path d="M108.5 294.5H128.5L138.5 304.5V335.5H108.5Z" fill="#ffffff" stroke="#6e6e6e" stroke-width="1"/><path d="M128.5 294.5V304.5H138.5" fill="none" stroke="#6e6e6e" stroke-width="1"/><path d="M131 318V333C131 338 147 338 147 333V318Z" fill="#eec67d"/><ellipse cx="139" cy="318" rx="8" ry="3.2" fill="#f3d595" stroke="#ffffff" stroke-width="0.8"/><path d="M177.5 294.5H197.5L207.5 304.5V335.5H177.5Z" fill="#ffffff" stroke="#6e6e6e" stroke-width="1"/><path d="M197.5 294.5V304.5H207.5" fill="none" stroke="#6e6e6e" stroke-width="1"/><circle cx="206" cy="327" r="10.5" fill="#fff" stroke="#3b78b5" stroke-width="1.2"/><path d="M205.5 321V328H211" stroke="#6e6e6e" stroke-width="1.2" fill="none"/><rect x="241" y="297" width="40" height="6" fill="#3f6fa8"/><path d="M335.5 304V294.5H356L364 302.5" fill="#fff" stroke="#6e6e6e" stroke-width="1"/><rect x="442.5" y="293.5" width="33" height="10" fill="#fff" stroke="#8a8a8a" stroke-width="1"/><path d="M446 297.5H455M458 297.5H473" stroke="#9fb6d4" stroke-width="1"/><path d="M542.5 304V294.5H562L570 302.5" fill="#fff" stroke="#6e6e6e" stroke-width="1"/><path d="M600.5 304V293.5H609L613 297.5V304" fill="#fff" stroke="#6e6e6e" stroke-width="1"/><rect x="780" y="297.5" width="40" height="5" fill="#b9c7dc" stroke="#6e6e6e" stroke-width="0.8"/><rect x="864" y="294" width="32" height="8" fill="#f0f0f0" stroke="#8a8a8a" stroke-width="0.8"/><rect x="874" y="294" width="12" height="8" fill="#a9bdd8"/><rect x="944" y="297" width="40" height="6" fill="#3f6fa8"/><path d="M968 300L973 303L988 292" stroke="#6aa884" stroke-width="3" fill="none"/><rect x="1007" y="295" width="42" height="8" fill="#3f6fa8"/><path d="M1036 294L1046 302M1052 294L1040 302" stroke="#e0623a" stroke-width="2.6"/><path d="M1084 301L1088.5 292L1093 301" stroke="#3b78b5" stroke-width="2" fill="none"/><path d="M1098.5 293V302" stroke="#444" stroke-width="1"/><path d="M1155 294.5H1163L1159 298.5Z" fill="#3b78b5"/><rect x="1150.5" y="298.5" width="17" height="4" fill="#b9c7dc" stroke="#8a9bb5" stroke-width="0.6"/><rect x="1504.500" y="292.5" width="16" height="8" fill="#fff" stroke="#3f6fa8" stroke-width="1"/><rect x="1504" y="292" width="17" height="3" fill="#3f6fa8"/><rect x="1510" y="298" width="16" height="5" fill="#3f6fa8"/><path d="M1681 292.5H1702M1681 298.5H1702" stroke="#9a9a9a" stroke-width="1.4"/><rect x="23.5" y="487.5" width="21" height="18" fill="#ffffff" stroke="#707070" stroke-width="1"/><rect x="23" y="487" width="22" height="3.8" fill="#4a7ebb"/><path d="M23.5 496H44.500M23.5 500.5H44.500M30.5 491V505.5M37.5 491V505.5" stroke="#8e8e8e" stroke-width="0.9"/><path d="M1869 437.7L1885 454.2M1885 437.7L1869 454.2" stroke="#555" stroke-width="1.1"/><g transform="translate(1867.5 682.5)" fill="#a6a6a6"><rect x="-1.5" y="-7.5" width="3" height="15" transform="rotate(0)"/><rect x="-1.5" y="-7.5" width="3" height="15" transform="rotate(45)"/><rect x="-1.5" y="-7.5" width="3" height="15" transform="rotate(90)"/><rect x="-1.5" y="-7.5" width="3" height="15" transform="rotate(135)"/><circle r="5.2"/><circle r="2.6" fill="#f3f2f1"/></g><g transform="translate(1867.5 712.5)" fill="#a6a6a6"><rect x="-1.5" y="-7.5" width="3" height="15" transform="rotate(0)"/><rect x="-1.5" y="-7.5" width="3" height="15" transform="rotate(45)"/><rect x="-1.5" y="-7.5" width="3" height="15" transform="rotate(90)"/><rect x="-1.5" y="-7.5" width="3" height="15" transform="rotate(135)"/><circle r="5.2"/><circle r="2.6" fill="#f3f2f1"/></g><g transform="translate(1867.5 772.5)" fill="#a6a6a6"><rect x="-1.5" y="-7.5" width="3" height="15" transform="rotate(0)"/><rect x="-1.5" y="-7.5" width="3" height="15" transform="rotate(45)"/><rect x="-1.5" y="-7.5" width="3" height="15" transform="rotate(90)"/><rect x="-1.5" y="-7.5" width="3" height="15" transform="rotate(135)"/><circle r="5.2"/><circle r="2.6" fill="#f3f2f1"/></g><g transform="translate(1867.5 802.5)" fill="#a6a6a6"><rect x="-1.5" y="-7.5" width="3" height="15" transform="rotate(0)"/><rect x="-1.5" y="-7.5" width="3" height="15" transform="rotate(45)"/><rect x="-1.5" y="-7.5" width="3" height="15" transform="rotate(90)"/><rect x="-1.5" y="-7.5" width="3" height="15" transform="rotate(135)"/><circle r="5.2"/><circle r="2.6" fill="#f3f2f1"/></g></svg>
<div style="left:207px;top:301px;width:1516px;height:700px;background:#ffffff;border:1px solid #5c5c5c;box-shadow:0 0 15px 1px rgba(0,0,0,0.32);"></div>
<span class="t s" style="left:248.50px;top:316px;font-size:18px;line-height:18px;color:#000000;letter-spacing:-0.116px;">Advanced Editor</span>
<span class="t s" style="left:253.15px;top:380px;font-size:52px;line-height:52px;color:#262626;transform-origin:0 0;transform:scaleX(0.8132);-webkit-text-stroke:1.7px #ffffff;">Query1</span>
<span class="t s" style="left:1471.00px;top:410px;font-size:18px;line-height:18px;color:#333333;letter-spacing:-0.078px;">Display Options</span>
<div style="left:253px;top:463px;width:1427px;height:600px;background:#fffffe;border:2px solid #c0c0c0;"></div>
<div style="left:1657px;top:465px;width:1px;height:600px;background:#d9d9d9;"></div>
<div style="left:1658px;top:569px;width:20px;height:3px;background:#424242;"></div>
<div style="left:1658px;top:572px;width:10px;height:15px;background:#9d9d9d;"></div>
<div style="left:279px;top:609.5px;width:1378px;height:2.4px;background:#ececec;"></div>
<div style="left:279px;top:630.5px;width:1378px;height:2.1px;background:#ececec;"></div>
<div style="left:1636px;top:609.5px;width:8px;height:23px;background:#e4e8e0;border:1px solid #b9b9b9;"></div>
<span class="t m" style="left:277.8px;top:613px;font-size:18px;line-height:18px;letter-spacing:-0.905px;white-space:pre;"><span style="position:static;color:#a31515">y_Description&quot;</span><span style="position:static;color:#000">, </span><span style="position:static;color:#0000ff">type</span><span style="position:static;color:#000"> </span><span style="position:static;color:#008080">text</span><span style="position:static;color:#000">}, {</span><span style="position:static;color:#a31515">&quot;CustClass&quot;</span><span style="position:static;color:#000">, Int64.Type}, {</span><span style="position:static;color:#a31515">&quot;Payment Terms Code&quot;</span><span style="position:static;color:#000">, </span><span style="position:static;color:#0000ff">type</span><span style="position:static;color:#000"> </span><span style="position:static;color:#008080">text</span><span style="position:static;color:#000">}, {</span><span style="position:static;color:#a31515">&quot;CreditLine&quot;</span><span style="position:static;color:#000">, Int64.Type}, {</span><span style="position:static;color:#a31515">&quot;Date&quot;</span><span style="position:static;color:#000">, </span><span style="position:static;color:#0000ff">type</span><span style="position:static;color:#000"> </span><span style="position:static;color:#008080">date</span><span style="position:static;color:#000">}})</span></span>
<svg style="left:0;top:0" width="1920" height="1080" viewBox="0 0 1920 1080"><defs><linearGradient id="pbi1" x1="0" y1="0" x2="1" y2="1"><stop offset="0" stop-color="#fbe58a"/><stop offset="1" stop-color="#f2c831"/></linearGradient><linearGradient id="pbi2" x1="0" y1="0" x2="1" y2="1"><stop offset="0" stop-color="#f6d24a"/><stop offset="1" stop-color="#eeb420"/></linearGradient><linearGradient id="pbi3" x1="0" y1="0" x2="1" y2="1"><stop offset="0" stop-color="#eab21f"/><stop offset="1" stop-color="#c9820f"/></linearGradient></defs><rect x="231.9" y="311" width="8.1" height="24" fill="url(#pbi3)"/><rect x="226.9" y="317.0" width="8.1" height="18.0" fill="url(#pbi2)"/><rect x="222.0" y="323.0" width="8.1" height="12.0" fill="url(#pbi1)"/><g stroke="#000" stroke-width="1.1" fill="none"><path d="M1609.5 316.5H1623.500V330.5H1609.5Z"/><path d="M1680.5 316.5L1695 331M1695 316.5L1680.5 331"/></g><path d="M1540 323.5H1555" stroke="#b0b0b0" stroke-width="1"/><path d="M1608.500 415.5H1618.500L1613.500 421Z" fill="#555"/><circle cx="1665" cy="418" r="11.2" fill="#3f75b8"/><rect x="1436.700" y="602.9" width="196.6" height="48.3" rx="13" ry="8.5" fill="none" stroke="#ed1c24" stroke-width="4.3"/><rect x="1436.500" y="602.5" width="199.1" height="49.7" fill="none" stroke="#ffffff" stroke-width="1"/><rect x="1436.500" y="602.5" width="199.1" height="49.7" fill="none" stroke="#1c7cd6" stroke-width="1" stroke-dasharray="3 3"/><rect x="1434.4" y="600.3" width="4.2" height="4.2" fill="#ffffff" stroke="#555" stroke-width="0.9"/><rect x="1434.4" y="625.2" width="4.2" height="4.2" fill="#ffffff" stroke="#555" stroke-width="0.9"/><rect x="1434.4" y="650.1" width="4.2" height="4.2" fill="#ffffff" stroke="#555" stroke-width="0.9"/><rect x="1533.9" y="600.3" width="4.2" height="4.2" fill="#ffffff" stroke="#555" stroke-width="0.9"/><rect x="1533.9" y="650.1" width="4.2" height="4.2" fill="#ffffff" stroke="#555" stroke-width="0.9"/><rect x="1633.5" y="600.3" width="4.2" height="4.2" fill="#ffffff" stroke="#555" stroke-width="0.9"/><rect x="1633.5" y="625.2" width="4.2" height="4.2" fill="#ffffff" stroke="#555" stroke-width="0.9"/><rect x="1633.5" y="650.1" width="4.2" height="4.2" fill="#ffffff" stroke="#555" stroke-width="0.9"/></svg>
<span class="t s" style="left:1660.30px;top:408px;font-size:19px;line-height:19px;color:#ffffff;font-weight:bold;">?</span></div></div>
<div style="left:1894px;top:206px;width:26px;height:749px;background:#f0f0f0;"></div>
<div style="left:1895px;top:233px;width:23.7px;height:403px;background:#cdcdcd;"></div>
<svg style="left:1894px;top:212px;" width="26" height="21" viewBox="0 0 26 21"><path d="M8 12L13 7L18 12" stroke="#505050" stroke-width="2.6" fill="none"/></svg>
<svg style="left:1894px;top:932px;" width="26" height="21" viewBox="0 0 26 21"><path d="M8 7L13 12L18 7" stroke="#505050" stroke-width="2.6" fill="none"/></svg>
<div style="left:0px;top:955px;width:1920px;height:26px;background:#f0f0f0;"></div>
<div style="left:27px;top:956.5px;width:1806px;height:23.5px;background:#cdcdcd;"></div>
<svg style="left:0px;top:955px;" width="26" height="26" viewBox="0 0 26 26"><path d="M15 8L10 13L15 18" stroke="#505050" stroke-width="2.6" fill="none"/></svg>
<svg style="left:1868px;top:955px;" width="26" height="26" viewBox="0 0 26 26"><path d="M10 8L15 13L10 18" stroke="#505050" stroke-width="2.6" fill="none"/></svg>
<div style="left:0px;top:981px;width:1920px;height:39px;background:#f0f0f0;border-top:1px solid #dadada;"></div>
<div style="left:244px;top:983px;width:1px;height:36px;background:#dcdcdc;"></div>
<div style="left:489px;top:983px;width:1px;height:36px;background:#dcdcdc;"></div>
<div style="left:734px;top:983px;width:1px;height:36px;background:#dcdcdc;"></div>
<div style="left:979px;top:983px;width:1px;height:36px;background:#dcdcdc;"></div>
<div style="left:1598px;top:983px;width:1px;height:36px;background:#dcdcdc;"></div>
<span class="t s" style="left:30.00px;top:994px;font-size:18px;line-height:18px;color:#111;letter-spacing:-0.122px;">431, 238px</span>
<span class="t s" style="left:277.00px;top:994px;font-size:18px;line-height:18px;color:#111;letter-spacing:0.161px;">200 × 50px</span>
<span class="t s" style="left:523.00px;top:994px;font-size:18px;line-height:18px;color:#111;letter-spacing:0.033px;">1920 × 1282px</span>
<span class="t s" style="left:1625.00px;top:995px;font-size:17.5px;line-height:17.5px;color:#111;letter-spacing:-0.600px;">100%</span>
<svg style="left:0;top:0" width="1920" height="1080" viewBox="0 0 1920 1080"><g stroke="#1f3864" stroke-width="1.2" fill="none"><path d="M13.5 992V1010M4.5 1001H22.5"/><path d="M11 994.5L13.5 992L16 994.5M11 1007.5L13.5 1010L16 1007.5M7 998.5L4.500 1001L7 1003.5M20 998.5L22.5 1001L20 1003.5"/></g><g stroke="#1f3864" stroke-width="1.1" fill="none"><rect x="255.500" y="991.5" width="15" height="13" stroke-dasharray="2 1.5"/><path d="M251.500 1004V992.5M249.500 994.5L251.500 992L253.500 994.5"/><path d="M256 1008.5H270M267.500 1006.500L270 1008.5L267.500 1010.5"/></g><g stroke="#1f3864" stroke-width="1.1" fill="none"><rect x="500.500" y="991.5" width="15.5" height="13" fill="#e9f1f8"/><path d="M496 1004V992.5M494 994.5L496 992L498 994.5"/><path d="M501 1008.5H516M513.500 1006.500L516 1008.5L513.500 1010.5"/></g><defs><linearGradient id="zb" x1="0" y1="0" x2="0" y2="1"><stop offset="0" stop-color="#ffffff"/><stop offset="0.55" stop-color="#f0f0f0"/><stop offset="1" stop-color="#c4c4c4"/></linearGradient></defs><circle cx="1690.500" cy="999.5" r="11" fill="url(#zb)" stroke="#8e8e8e" stroke-width="1"/><path d="M1685 999.5H1696" stroke="#666" stroke-width="2.6"/><circle cx="1873.500" cy="999.5" r="11" fill="url(#zb)" stroke="#8e8e8e" stroke-width="1"/><path d="M1868 999.5H1879M1873.500 994V1005" stroke="#555" stroke-width="2.6"/><rect x="1719.500" y="996.3" width="127.500" height="5.2" fill="#e6e9e9" stroke="#d2d2d2" stroke-width="0.9"/><path d="M1776 986H1791V1007L1783.500 1014L1776 1007Z" fill="#0078d7"/><defs><linearGradient id="tb" x1="0" y1="0" x2="1" y2="0"><stop offset="0" stop-color="#45281f"/><stop offset="0.5" stop-color="#431e1c"/><stop offset="1" stop-color="#42221f"/></linearGradient><linearGradient id="tpbi1" x1="0" y1="0" x2="1" y2="1"><stop offset="0" stop-color="#fbe58a"/><stop offset="1" stop-color="#f2c831"/></linearGradient><linearGradient id="tpbi2" x1="0" y1="0" x2="1" y2="1"><stop offset="0" stop-color="#f6d24a"/><stop offset="1" stop-color="#eeb420"/></linearGradient><linearGradient id="tpbi3" x1="0" y1="0" x2="1" y2="1"><stop offset="0" stop-color="#eab21f"/><stop offset="1" stop-color="#c9820f"/></linearGradient><linearGradient id="np" x1="0" y1="0" x2="1" y2="1"><stop offset="0" stop-color="#d8f0f4"/><stop offset="1" stop-color="#4aa3b5"/></linearGradient></defs><rect x="0" y="1020" width="1920" height="60" fill="url(#tb)"/><rect x="72.500" y="1020" width="515" height="60" fill="#cfcfcf"/><rect x="74" y="1021.500" width="512.500" height="56.500" fill="#f2f2f2"/><path d="M24 1041.500L33.800 1040.200V1049.500H24ZM35 1040L48 1038.200V1049.500H35ZM24 1050.700H33.800V1060L24 1058.700ZM35 1050.700H48V1062L35 1060.200Z" fill="#ffffff"/><circle cx="105.500" cy="1047" r="7.3" fill="none" stroke="#1a1a1a" stroke-width="1.6"/><path d="M100.300 1052.300L90.500 1061.500" stroke="#1a1a1a" stroke-width="1.7"/><circle cx="624" cy="1050" r="9.800" fill="none" stroke="#ffffff" stroke-width="3.4"/><g stroke="#ffffff" stroke-width="1.3" fill="none"><rect x="684.500" y="1044.500" width="15" height="10"/><path d="M684.500 1041V1038.500H699.500V1041M684.500 1058V1060.500H699.500V1058M706.500 1038V1061"/></g><rect x="704.500" y="1044.500" width="4" height="4" fill="#fff"/><rect x="865" y="1020" width="61" height="60" fill="#b15d24"/><rect x="919.500" y="1020" width="6.500" height="60" fill="#a8531d"/><rect x="865" y="1077" width="61" height="3" fill="#f7630c"/><rect x="1054" y="1020" width="61" height="60" fill="#6b4a46"/><rect x="1243" y="1020" width="61" height="60" fill="#573531"/><rect x="743" y="1077" width="50" height="3" fill="#fcc9b9"/><rect x="807" y="1077" width="50" height="3" fill="#fcc9b9"/><rect x="1054" y="1077" width="61" height="3" fill="#fcc9b9"/><rect x="1123" y="1077" width="50" height="3" fill="#fcc9b9"/><rect x="1186" y="1077" width="49" height="3" fill="#fcc9b9"/><rect x="1243" y="1077" width="61" height="3" fill="#fcc9b9"/><rect x="1312" y="1077" width="49" height="3" fill="#fcc9b9"/><rect x="1159" y="1077" width="4" height="3" fill="#c9a096"/><path d="M752 1040.500C752 1038.500 753 1037.500 754.500 1037.500H764L766.500 1040H782C783.500 1040 784 1040.800 784 1042V1060.500C784 1061.500 783.500 1062 782.500 1062H753.500C752.500 1062 752 1061.500 752 1060.500Z" fill="#ffd45e"/><path d="M752 1040.500C752 1038.500 753 1037.500 754.500 1037.500H764L766.500 1040L764 1042.500H752Z" fill="#e8a912"/><path d="M757.500 1063V1053C757.500 1052 758.200 1051.500 759 1051.500H777C777.800 1051.500 778.500 1052 778.500 1053V1063H773.500V1056.500H762.500V1063Z" fill="#3a96dd"/><path d="M832 1049.5L817.71 1041.25A16.5 16.5 0 0 1 846.29 1041.25Z" fill="#db4437"/><path d="M832 1049.5L846.29 1041.25A16.5 16.5 0 0 1 832.00 1066.00Z" fill="#f4c20d"/><path d="M832 1049.5L832.00 1066.00A16.5 16.5 0 0 1 817.71 1041.25Z" fill="#0f9d58"/><circle cx="832" cy="1049.5" r="7.59" fill="#fff"/><circle cx="832" cy="1049.5" r="5.94" fill="#4285f4"/><circle cx="841" cy="1058.500" r="11.500" fill="#dcdcdc"/><circle cx="841" cy="1054.500" r="3.800" fill="#9e9e9e"/><path d="M833.500 1064C834.500 1059.500 847.500 1059.500 848.500 1064C846.500 1067 835.500 1067 833.500 1064Z" fill="#9e9e9e"/><rect x="885" y="1034" width="23" height="33" rx="2" fill="#1490df"/><rect x="885" y="1034" width="11.500" height="11" fill="#0a5fb4"/><rect x="896.500" y="1034" width="11.500" height="11" fill="#28a8ea"/><rect x="896.500" y="1045" width="11.500" height="11" fill="#50d9ff"/><rect x="885" y="1045" width="11.500" height="11" fill="#0f78d4"/><rect x="875" y="1041" width="17.500" height="18" rx="1.500" fill="#0f6cbd"/><rect x="892" y="1054.500" width="19" height="16" fill="#e8b571"/><path d="M893 1056.500L901.500 1063L910 1056.500" stroke="#fff" stroke-width="1.400" fill="none"/><g stroke="#ffffff" stroke-width="1.500" fill="none"><path d="M946 1045.500L967.500 1035V1043M946 1045.500V1063.500L954.500 1060.500"/></g><path d="M956 1054.500L970.500 1045.500V1048L956 1057ZM956 1058.500L962.500 1054.500V1061L956 1065ZM964 1053.500L970.500 1049.500V1056.500L964 1060.500Z" fill="#ffffff"/><circle cx="1021.500" cy="1048.500" r="16.500" fill="#c9c9c9"/><circle cx="1021.500" cy="1048.500" r="14" fill="#f1f1f1"/><circle cx="1021.500" cy="1048.500" r="11.500" fill="#3a9c2c"/><circle cx="1021.500" cy="1048.500" r="7.300" fill="#d9d9d9"/><circle cx="1021.500" cy="1048.500" r="5.300" fill="#2b2b2b"/><path d="M1028.500 1055.500L1034 1060" stroke="#3a9c2c" stroke-width="3.500"/><path d="M1068 1055C1066 1048 1073 1039.500 1084 1038.500C1094 1037.500 1100 1043 1099 1050C1098 1058 1088 1063 1080 1063C1075 1063 1076.500 1057.500 1072.500 1057.500C1070.500 1057.500 1068.500 1057.500 1068 1055Z" fill="#c4e0f2" stroke="#7db4dc" stroke-width="0.800"/><circle cx="1072.500" cy="1050.500" r="2.500" fill="#e0463a"/><circle cx="1078" cy="1045" r="2.500" fill="#56b947"/><circle cx="1085" cy="1042.500" r="2.600" fill="#f6b226"/><circle cx="1081.500" cy="1053.500" r="2" fill="#7a7a7a"/><path d="M1084 1066.500L1092 1040.500L1094.500 1041.500L1086 1067Z" fill="#ee8a1c"/><path d="M1092 1040.500L1093.500 1033.500L1101 1035.500L1094.800 1041.800Z" fill="#d8aa6e"/><rect x="1148.500" y="1032" width="12.500" height="36" fill="url(#tpbi3)"/><rect x="1141" y="1041" width="12.500" height="27" fill="url(#tpbi2)"/><rect x="1133" y="1050" width="12.500" height="18" fill="url(#tpbi1)"/><path d="M1211 1049.5L1196.71 1041.25A16.5 16.5 0 0 1 1225.29 1041.25Z" fill="#db4437"/><path d="M1211 1049.5L1225.29 1041.25A16.5 16.5 0 0 1 1211.00 1066.00Z" fill="#f4c20d"/><path d="M1211 1049.5L1211.00 1066.00A16.5 16.5 0 0 1 1196.71 1041.25Z" fill="#0f9d58"/><circle cx="1211" cy="1049.5" r="7.59" fill="#fff"/><circle cx="1211" cy="1049.5" r="5.94" fill="#4285f4"/><circle cx="1219.500" cy="1059" r="11.500" fill="#6f7a7a"/><circle cx="1219.500" cy="1053" r="3.300" fill="#4a3c36"/><path d="M1213.500 1066C1214 1057 1225 1057 1225.500 1066Z" fill="#e4e4e6"/><path d="M1286.300 1037.500L1288 1038.500V1061L1284 1064Z" fill="#b8912a"/><path d="M1268 1034L1286.300 1037.300L1286.500 1060.500L1281 1065.300L1256 1057Z" fill="#eef3f5"/><path d="M1268 1034.500L1285 1037.500L1277 1060.500L1263 1057.500Z" fill="url(#np)"/><path d="M1268 1034.500L1266 1057.800L1256 1057Z" fill="#3d8d9d"/><path d="M1256 1057L1266 1057.800L1277 1060.500L1281 1065.300Z" fill="#ffffff"/><path d="M1268.500 1034.200L1286 1037.300" stroke="#9a9a9a" stroke-width="1.300"/><rect x="1326" y="1034" width="28" height="32" rx="2" fill="#2b7cd3"/><rect x="1326" y="1034" width="28" height="8.500" fill="#41a5ee"/><rect x="1326" y="1050.500" width="28" height="8" fill="#185abd"/><rect x="1326" y="1058" width="28" height="8" rx="2" fill="#103f91"/><rect x="1318" y="1041" width="18" height="18" rx="1.500" fill="#185abd"/><path d="M1387.500 1054L1396 1045.500L1404.500 1054" stroke="#fff" stroke-width="1.300" fill="none"/><path d="M1436 1058C1431 1058 1431 1051 1436 1050.500C1437 1046 1442 1044.500 1445 1047C1448 1041.500 1454 1044 1454 1049.500C1457.5 1050 1457.5 1058 1453 1058Z" fill="#0f78d4"/><path d="M1436 1058C1431 1058 1431 1052 1436 1051.500L1445 1054L1454 1050C1457.5 1051 1457.5 1058 1453 1058Z" fill="#28a8ea"/><path d="M1484 1058C1479 1058 1479 1051 1484 1050.500C1485 1046 1490 1044.500 1493 1047C1496 1041.500 1502 1044 1502 1049.500C1505.5 1050 1505.5 1058 1501 1058Z" fill="#0f78d4"/><path d="M1484 1058C1479 1058 1479 1052 1484 1051.500L1493 1054L1502 1050C1505.5 1051 1505.5 1058 1501 1058Z" fill="#28a8ea"/><g stroke="#ffffff" stroke-width="1.200" fill="none"><path d="M1529 1046.500H1533L1537.500 1042V1059L1533 1054.500H1529Z"/><path d="M1541 1047.500C1542.500 1049.500 1542.500 1052 1541 1054M1544 1045C1547 1048.500 1547 1053 1544 1056.500M1547 1042.500C1551.500 1047.500 1551.500 1054 1547 1059"/></g><g fill="#ffffff"><path d="M1582 1039.500L1588 1043.500L1582 1047.500L1576 1043.500Z"/><path d="M1594 1039.500L1600 1043.500L1594 1047.500L1588 1043.500Z"/><path d="M1594 1047.500L1600 1051.500L1594 1055.500L1588 1051.500Z"/><path d="M1588 1052.500L1593 1056L1591 1058.500Z"/></g><rect x="1576" y="1048.500" width="13.500" height="13.500" rx="2.500" fill="#e0102a"/><g stroke="#ffffff" stroke-width="1.200" fill="none"><path d="M1640 1058L1647 1042.500C1648 1040.500 1651 1041.500 1650.500 1043.500L1644.500 1058.500C1643.500 1060.500 1640 1060 1640 1058Z"/><path d="M1642 1052.500C1637 1050.500 1631 1055 1633.500 1058.500C1635.500 1061 1639 1059 1640 1057M1648 1050.500C1650 1049.500 1652.500 1050 1652.500 1051.500"/></g><path d="M1858 1038H1882V1056H1866.500V1062.500L1861.500 1056H1858Z" fill="#ffffff"/><path d="M1862.500 1043H1877.500M1862.500 1046.500H1877.500M1862.500 1050H1873" stroke="#45261f" stroke-width="1.100"/><circle cx="1881.500" cy="1062" r="11.300" fill="#3b2725" stroke="#8a7a78" stroke-width="1"/><rect x="1912.500" y="1020" width="1" height="60" fill="#8a7673"/></svg>
<span class="t s" style="left:132.50px;top:1041px;font-size:23px;line-height:23px;color:#1a1a1a;letter-spacing:-0.379px;">Type here to search</span>
<span class="t s" style="left:1682.00px;top:1043px;font-size:17px;line-height:17px;color:#ffffff;letter-spacing:-1.402px;">ENG</span>
<span class="t s" style="left:1762.00px;top:1028px;font-size:18px;line-height:18px;color:#ffffff;letter-spacing:-0.523px;">16:42</span>
<span class="t s" style="left:1737.00px;top:1056px;font-size:18px;line-height:18px;color:#ffffff;letter-spacing:0.362px;">11/03/2021</span>
<span class="t s" style="left:1876.50px;top:1054px;font-size:17px;line-height:17px;color:#ffffff;font-weight:bold;">5</span>
<span class="t s" style="left:1580.00px;top:1050px;font-size:12px;line-height:12px;color:#ffffff;font-weight:bold;">1</span>
<span class="t s" style="left:879.50px;top:1045px;font-size:13px;line-height:13px;color:#ffffff;font-weight:bold;">O</span>
<span class="t s" style="left:1320.50px;top:1043px;font-size:15px;line-height:15px;color:#ffffff;font-weight:bold;">W</span>
</body></html>
